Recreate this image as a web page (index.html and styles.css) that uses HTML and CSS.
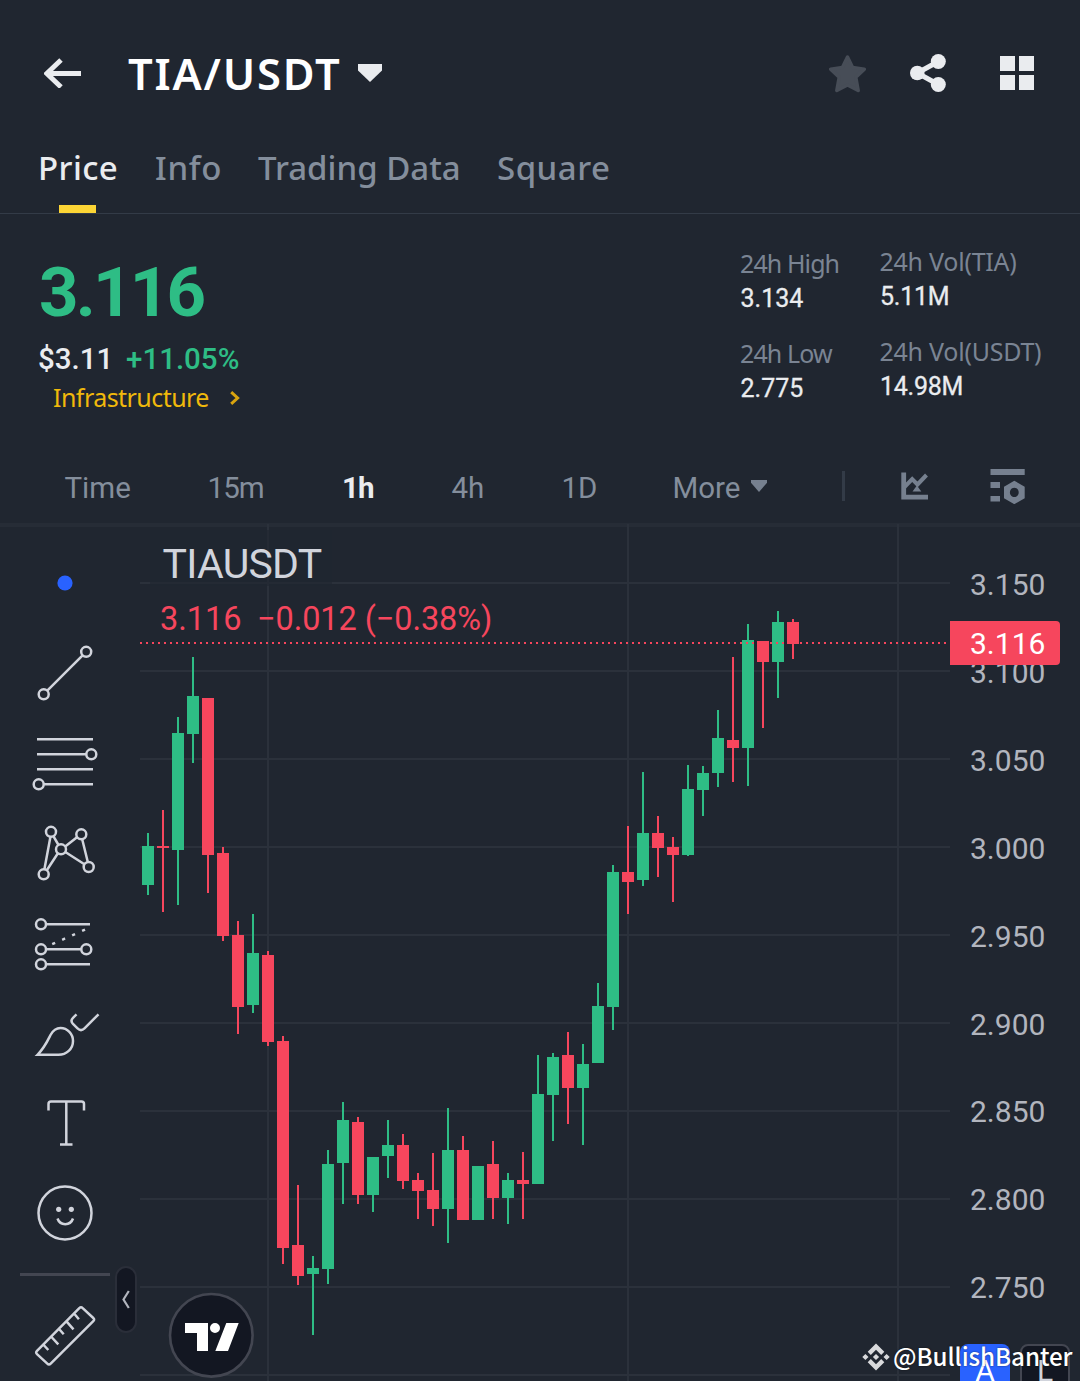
FILE: index.html
```html
<!DOCTYPE html>
<html lang="en">
<head>
<meta charset="utf-8">
<title>TIA/USDT</title>
<link rel="stylesheet" href="styles.css">
</head>
<body>
<div class="app">
  <header class="header">
    <svg class="back" width="38" height="30" viewBox="44 58 38 30"><path d="M61 60 46.8 73.5 61 87M47 73.5H81" fill="none" stroke="#eaecef" stroke-width="5"/></svg>
    <h1 class="pair">TIA/USDT</h1>
    <svg class="pair-caret" width="24" height="18" viewBox="0 0 24 18"><path d="M0 0H24V6.5L12 18 0 6.5Z" fill="#eaecef"/></svg>
    <div class="header-actions">
      <svg width="38" height="40" viewBox="829 53 38 40"><path d="M847.5 57 852.6 67.5 864.3 69.2 855.8 77.3 858.2 90.5 847.5 85 836.8 90.5 839.2 77.3 830.7 69.2 842.4 67.5Z" fill="#474d57" stroke="#474d57" stroke-width="3.5" stroke-linejoin="round"/></svg>
      <svg width="38" height="40" viewBox="909 53 38 40"><path d="M938.3 61.5 917.3 73 938.3 84.5" fill="none" stroke="#eaecef" stroke-width="5"/><g fill="#eaecef"><circle cx="917.3" cy="73" r="7.3"/><circle cx="938.3" cy="61.5" r="7.5"/><circle cx="938.3" cy="84.5" r="7.5"/></g></svg>
      <svg width="34" height="34" viewBox="0 0 34 34"><path d="M0 0H15V15H0ZM19 0H34V15H19ZM0 19H15V34H0ZM19 19H34V34H19Z" fill="#eaecef"/></svg>
    </div>
  </header>

  <nav class="tabs">
    <a class="tab tab-price active">Price</a>
    <a class="tab tab-info">Info</a>
    <a class="tab tab-data">Trading Data</a>
    <a class="tab tab-square">Square</a>
  </nav>

  <section class="summary">
    <div class="quote">
      <div class="last">3.116</div>
      <div class="change"><span class="fiat">$3.11</span><span class="percent">+11.05%</span></div>
      <div class="sector"><span>Infrastructure</span><svg width="10" height="14" viewBox="0 0 10 14"><path d="M1.2 1.2 7.6 7 1.2 12.8" fill="none" stroke="#d9a40f" stroke-width="3"/></svg></div>
    </div>
    <div class="stats">
      <dl class="stat-col prices">
        <dt>24h High</dt><dd>3.134</dd>
        <dt>24h Low</dt><dd>2.775</dd>
      </dl>
      <dl class="stat-col volumes">
        <dt>24h Vol(TIA)</dt><dd>5.11M</dd>
        <dt>24h Vol(USDT)</dt><dd>14.98M</dd>
      </dl>
    </div>
  </section>

  <nav class="intervals">
    <span>Time</span>
    <span class="quarter">15m</span>
    <span class="on">1h</span>
    <span>4h</span>
    <span>1D</span>
    <span class="more">More<svg width="16" height="12" viewBox="0 0 16 12"><path d="M0 0H16V2.8L8 12 0 2.8Z" fill="#76808f"/></svg></span>
    <i class="bar"></i>
    <svg width="28" height="28" viewBox="901.5 471.5 28 28"><path d="M904.2 472V496.7H928.5" fill="none" stroke="#76808f" stroke-width="4.8"/><path d="M905 486.5 912.7 478.6 918 484 927 474.5" fill="none" stroke="#76808f" stroke-width="4"/><path d="M917.4 485 921.8 491H913Z" fill="#76808f"/></svg>
    <svg width="35" height="36" viewBox="990 468 35 36"><path d="M990.5 469H1024.7V475H990.5ZM990.5 482H1000V488H990.5ZM990.5 496H1000V501.5H990.5Z" fill="#76808f"/><path fill-rule="evenodd" d="M1014.3 480.7 1024.7 486.7V498.2L1014.3 504.2 1004 498.2V486.7ZM1014.3 487.7A4.4 4.7 0 1 0 1014.31 487.7Z" fill="#76808f"/></svg>
  </nav>

  <main class="chart">
    <aside class="tools">
      <svg viewBox="0 538 140 90"><circle cx="65" cy="583" r="7.6" fill="#2962ff"/></svg>
      <svg class="line" viewBox="0 628 140 90"><circle cx="86.2" cy="651.8" r="5"/><circle cx="43.7" cy="694.3" r="5"/><path d="M82.6 655.4 47.3 690.7"/></svg>
      <svg class="line" viewBox="0 718 140 90"><path d="M37 739.3H93M37 754.3H86M37 769.3H93M44 784.3H93"/><circle cx="91.3" cy="754.3" r="5"/><circle cx="38.7" cy="784.3" r="5"/></svg>
      <svg class="line" viewBox="0 808 140 90"><path d="M50.4 837 44.4 869.3M53.5 836.4 58.5 845M65.2 846.4 77 837.2M82.2 839.3 87.8 862M65.3 852 84.4 864.3M57.9 853.3 46.8 870.3"/><circle cx="51" cy="831.8" r="5"/><circle cx="81.3" cy="834.3" r="5"/><circle cx="61" cy="849.3" r="5"/><circle cx="43.7" cy="874.3" r="5"/><circle cx="88.7" cy="867" r="5"/></svg>
      <svg class="line" viewBox="0 898 140 90"><path d="M46 924.3H90M46 949.3H81M46 964.3H90"/><path d="M52.2 944.2 86 929.2" stroke-dasharray="3.2 7.7"/><circle cx="41" cy="924.3" r="5"/><circle cx="41" cy="949.3" r="5"/><circle cx="86.3" cy="949.3" r="5"/><circle cx="41" cy="964.3" r="5"/></svg>
      <svg class="line" viewBox="0 988 140 90"><path d="M37.5 1054.8C45 1047 48 1040 50.5 1035 53 1030.5 56 1028 60.5 1028 67.5 1028 73 1034 73 1041 73 1049 66.5 1054.8 58.5 1054.8ZM76.5 1014.3 73 1017.8Q70 1020.8 73 1024L77.500 1028.4Q81 1031.8 84.5 1028.4L98.5 1014.3"/></svg>
      <svg class="line" viewBox="0 1078 140 90"><path d="M48.5 1110.5V1104Q48.5 1101.5 51 1101.5H81.5Q84 1101.5 84 1104V1110.5M66.3 1101.5V1144.5M60 1144.5H72.5"/></svg>
      <svg class="line" viewBox="0 1168 140 90"><circle cx="65" cy="1213" r="26.5"/><path d="M57.5 1218.5C60 1226 70.5 1226 73 1218.5"/><g fill="#d1d4dc" stroke="none"><circle cx="58.7" cy="1209.3" r="2.6"/><circle cx="71.3" cy="1209.3" r="2.6"/></g></svg>
      <hr>
      <svg class="line" viewBox="0 1291 140 90"><path d="M79.3 1308.2Q81 1306.5 82.7 1308.2L93.3 1318Q95 1319.5 93.3 1321.2L50.7 1363.7Q49 1365.4 47.3 1363.7L37 1354.2Q35.3 1352.6 37 1350.8ZM43.7 1345 48.3 1350M51.5 1337 58.3 1344.3M59.3 1329.2 63.7 1334.3M66.7 1321.6 73.5 1329.3M74.5 1314 78.9 1319.2"/></svg>
      <div class="collapse"><svg width="8" height="19" viewBox="0 0 8 19"><path d="M6.8 1 1.5 9.5 6.8 18" fill="none" stroke="#b2b5be" stroke-width="2.2"/></svg></div>
    </aside>

    <div class="plot">
      <svg width="810" height="858" viewBox="140 523 810 858">
        <path stroke="#2b313b" stroke-width="2" d="M140 583H950M140 671H950M140 759H950M140 847H950M140 935H950M140 1023H950M140 1111H950M140 1199H950M140 1287H950M140 1375H950M268 524V1381M628 524V1381M898 524V1381"/>
        <g stroke="#2ebd85">
          <path stroke-width="2" d="M148 833V895M178 717V905M193 657V763M253 914V1013M313 1256V1335M328 1150V1284M343 1102V1204M373 1157V1212M388 1120V1178M448 1108V1243M508 1173V1224M538 1055V1184M553 1053V1141M583 1044V1145M598 983V1063M613 865V1030M643 772V886M688 765V856M703 766V816M718 710V787M748 624V786M778 611V698"/>
          <path stroke-width="12" d="M148 846V885M178 733V850M193 696V734M253 953V1005M313 1268V1274M328 1164V1269M343 1120V1163M373 1157V1195M388 1145V1156M448 1150V1209M478 1166V1220M508 1180V1198M538 1094V1184M553 1057V1095M583 1064V1088M598 1006V1063M613 872V1007M643 833V880M688 789V855M703 773V790M718 738V773M748 640V748M778 622V662"/>
        </g>
        <g stroke="#f6465d">
          <path stroke-width="2" d="M163 810V912M208 698V893M223 847V941M238 921V1034M268 951V1046M283 1036V1264M298 1185V1285M358 1117V1204M403 1134V1189M418 1173V1219M433 1153V1226M463 1136V1220M493 1141V1219M523 1152V1219M568 1032V1124M628 826V914M658 816V877M673 837V902M733 657V782M763 641V728M793 619V659"/>
          <path stroke-width="12" d="M163 846V848M208 698V855M223 853V936M238 935V1007M268 955V1042M283 1041V1248M298 1245V1276M358 1122V1195M403 1145V1181M418 1180V1191M433 1190V1209M463 1150V1220M493 1164V1198M523 1180V1184M568 1055V1088M628 872V882M658 833V848M673 847V855M733 740V748M763 641V662M793 622V644"/>
          <path stroke-width="2" stroke-dasharray="2 4" d="M140 643H950"/>
        </g>
        <circle cx="211.3" cy="1335.3" r="41.3" fill="#131722" stroke="#434651" stroke-width="2.6"/>
        <path fill="#fff" d="M185 1323H208V1351H197V1333H185ZM226.3 1323H238.7L228 1351H215.3ZM220 1328A5 5 0 1 1 210 1328 5 5 0 1 1 220 1328Z"/>
      </svg>
      <div class="legend">
        <div class="symbol">TIAUSDT</div>
        <div class="values"><span>3.116</span><span class="delta">−0.012 (−0.38%)</span></div>
      </div>
    </div>

    <div class="axis">
      <span>3.150</span><span>3.100</span><span>3.050</span><span>3.000</span><span>2.950</span><span>2.900</span><span>2.850</span><span>2.800</span><span>2.750</span>
      <div class="price-tag">3.116</div>
      <div class="scale-buttons"><b class="auto">A</b><b class="log">L</b></div>
    </div>

    <div class="watermark">
      <svg width="28" height="28" viewBox="-14 -14 28 28"><path fill="#d9dadc" d="M0-13.5 8.3-5.2 5.2-2.1 0-7.3-5.2-2.1-8.3-5.2ZM0 13.5 8.3 5.2 5.2 2.1 0 7.3-5.2 2.1-8.3 5.2ZM0-3.1 3.1 0 0 3.1-3.1 0ZM-10.6-3.1-7.5 0-10.6 3.1-13.7 0ZM10.6-3.1 13.7 0 10.6 3.1 7.5 0Z"/></svg>
      <span>@BullishBanter</span>
    </div>
  </main>
</div>
</body>
</html>
```

FILE: styles.css
```css
* { box-sizing: border-box; margin: 0; padding: 0; }
body { background: #202630; }
svg { display: block; flex: none; }

.app {
  width: 1080px;
  height: 1381px;
  overflow: hidden;
  display: flex;
  flex-direction: column;
  background: #202630;
  color: #eaecef;
  font-family: "Noto Sans", sans-serif;
  white-space: nowrap;
}

.header {
  height: 146px;
  flex: none;
  display: flex;
  align-items: center;
  padding: 0 46px 0 44px;
}
.pair {
  width: 230px;
  margin-left: 46px;
  font-size: 43.5px;
  font-weight: 600;
  line-height: 60px;
  letter-spacing: 1.8px;
  color: #fff;
}
.header-actions {
  margin-left: auto;
  display: flex;
  align-items: center;
}
.header-actions svg:nth-child(2) { margin: 0 53px 0 42.5px; }

.tabs {
  height: 68px;
  flex: none;
  display: flex;
  padding-left: 38px;
  border-bottom: 1px solid #333b47;
  font-size: 33px;
  font-weight: 500;
  line-height: 43px;
  color: #848e9c;
}
.tab { height: 67px; flex: none; }
.tab-price { width: 117px; letter-spacing: .4px; }
.tab-info { width: 103px; letter-spacing: .7px; }
.tab-data { width: 239px; }
.tab-square { letter-spacing: .5px; }
.tab.active { color: #eaecef; }
.tab.active::after {
  content: "";
  display: block;
  width: 37px;
  height: 8px;
  margin: 16px 0 0 21px;
  background: #fcd535;
}

.summary {
  height: 239px;
  flex: none;
  display: flex;
  padding-left: 38px;
}
.quote { width: 702px; padding-top: 44px; }
.last {
  padding-left: 1px;
  font: bold 69px/70px Roboto, sans-serif;
  letter-spacing: -2.8px;
  color: #2ebd85;
}
.change {
  display: flex;
  margin-top: 13px;
  font: 500 29.5px/36px Roboto, sans-serif;
}
.fiat { width: 88px; }
.percent { color: #2ebd85; }
.sector {
  display: flex;
  align-items: center;
  padding-left: 15px;
  font-size: 25px;
  line-height: 41px;
  letter-spacing: -.55px;
  color: #f0b90b;
}
.sector span { width: 177px; }
.stats { display: flex; padding-top: 31px; }
.stat-col dt { font-size: 25px; line-height: 36px; color: #7a8493; }
.stat-col dd { font: 25px/36px Roboto, sans-serif; margin-bottom: 18px; padding-left: .5px; -webkit-text-stroke: .3px; }
.prices { width: 139.5px; letter-spacing: -.9px; }
.volumes { margin-top: -2px; letter-spacing: -.25px; }
.prices dd { letter-spacing: 0; }

.intervals {
  height: 70px;
  flex: none;
  display: grid;
  grid-template-columns: 143px 134.5px 109.5px 110px 111px 170px 58.5px 88.5px auto;
  align-items: center;
  padding-left: 64.5px;
  font: 29.5px/40px Roboto, sans-serif;
  color: #848e9c;
}
.intervals .quarter { letter-spacing: -.9px; }
.intervals .on { color: #eaecef; font-weight: bold; letter-spacing: -1px; }
.intervals .more { display: flex; align-items: center; justify-content: space-between; width: 94.5px; }
.more svg { margin-top: -5px; }
.intervals .bar { width: 3px; height: 30px; background: #333b47; margin: -4px 0 0 -1px; }
.intervals > svg { margin-top: -4px; }

.chart {
  height: 858px;
  flex: none;
  display: flex;
  position: relative;
  background: linear-gradient(#262c36 4px, transparent 4px);
}
.tools { width: 140px; padding-top: 15px; position: relative; }
.tools > svg { width: 140px; height: 90px; }
.tools .line { fill: none; stroke: #d1d4dc; stroke-width: 2.5; }
.tools hr { width: 90px; height: 3px; margin: 15px 0 15px 20px; border: 0; background: #434651; }
.collapse {
  position: absolute;
  left: 115px;
  top: 743px;
  width: 22px;
  height: 67px;
  display: flex;
  align-items: center;
  justify-content: center;
  border: 2px solid #2a2e39;
  border-radius: 11px;
  background: #131722;
}

.plot { width: 810px; position: relative; }
.legend { position: absolute; left: 10px; top: 7px; font-family: Roboto, sans-serif; }
.symbol {
  width: 182px;
  height: 56px;
  padding-left: 12.5px;
  font-size: 41px;
  line-height: 68px;
  letter-spacing: -.75px;
  color: #d1d4dc;
  background: rgba(32, 38, 48, .6);
}
.values {
  display: flex;
  width: 353px;
  height: 50px;
  padding: 8px 0 0 10px;
  font-size: 32.5px;
  line-height: 50px;
  color: #f6465d;
}
.values span:first-child { width: 97px; }
.delta { letter-spacing: -.08px; }

.axis {
  width: 130px;
  padding: 18px 0 0 20px;
  position: relative;
  display: flex;
  flex-direction: column;
  font: 30px/87.9px Roboto, sans-serif;
  color: #b2b5be;
}
.price-tag {
  position: absolute;
  left: 0;
  top: 98px;
  width: 110px;
  height: 44px;
  padding-left: 20px;
  border-radius: 0 4px 4px 0;
  line-height: 45px;
  color: #fff;
  background: #f6465d;
}
.scale-buttons { position: absolute; left: 10px; top: 821px; display: flex; gap: 10px; }
.scale-buttons b {
  width: 50px;
  height: 50px;
  border-radius: 8px;
  font-weight: 400;
  line-height: 54px;
  text-align: center;
}
.auto { background: #2962ff; color: #fff; }
.scale-buttons .log { background: #131722; border: 2px solid #434651; line-height: 50px; color: #d1d4dc; }

.watermark {
  position: absolute;
  left: 862px;
  top: 814px;
  display: flex;
  align-items: center;
  gap: 3px;
  height: 40px;
  font: 500 24.2px/38px "Noto Sans CJK SC", sans-serif;
  letter-spacing: -.08px;
  color: #fff;
  text-shadow: 0 0 2px rgba(0, 0, 0, .6);
}
.watermark span { height: 40px; }
```
